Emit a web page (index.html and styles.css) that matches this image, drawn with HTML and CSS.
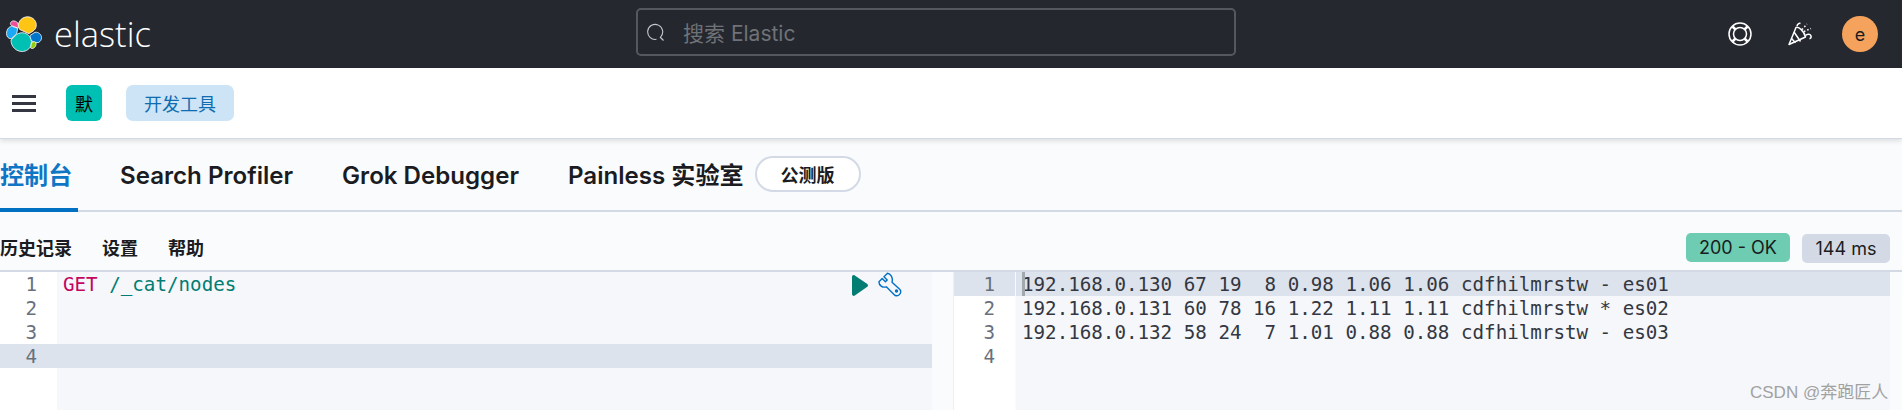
FILE: index.html
```html
<!DOCTYPE html>
<html lang="zh">
<head>
<meta charset="utf-8">
<title>Console - Elastic</title>
<link rel="stylesheet" href="styles.css">
</head>
<body>
<header class="topbar">
  <div class="brand">
    <svg class="logo" viewBox="0 0 36 36" width="36" height="36">
      <g stroke="#fff" stroke-width="0.8">
        <path fill="#f04e98" d="M4.400 7.500C5 4.500 8.800 4 11.500 6.600L13 10.200 11.700 12 6 9.800C5 9.400 4.300 8.500 4.400 7.500Z"/>
        <path fill="#fec514" d="M12.300 10.500C12 5 16.500.6 22 .8c5.300.2 9 4.800 8.200 9.500-.3 2-1.600 3.700-3.300 4.900l-4 2.500-9.200-4.200-1.400-3Z"/>
        <path fill="#1ba9f5" d="M.5 17.500C.5 13 3.600 10 6.500 10.400l5.200 2-1 5.200-5.600 5.200C2 22.600.5 20.300.5 17.500Z"/>
        <path fill="#0077cc" d="M24 19.500l5-3.200c3.500-.5 6.500 2.200 6.500 5.300 0 2-1 3.800-2.800 4.800l-4 .5-4.700-3.500Z"/>
        <path fill="#00bfb3" d="M5 24l5.900-5.700c4-2.500 8.800-1.800 11.700 1.100 3 3 3.200 7 2.300 9.800-.9 3.700-4.700 6.300-8.700 6.300C10.500 35.500 5 31 5 24Z"/>
        <path fill="#93c90e" d="M25.800 26l2.700-.3 1.500.9c.5 3.300-1.800 6.300-4.300 5.900l-1.200-.7 1.300-5.800Z"/>
      </g>
    </svg>
    <span class="wordmark">elastic</span>
  </div>
  <div class="searchbox">
    <svg class="search-icon" viewBox="0 0 18 18" width="18" height="18" fill="none" stroke="#c6c8cb" stroke-width="1.100">
      <path d="M9.500 16.300A7.500 7.500 0 1 1 13.700 14M13 14l3.500 3.500"/>
    </svg>
    <span class="placeholder">搜索 Elastic</span>
  </div>
  <div class="topicons">
    <svg class="topicon" viewBox="0 0 24 24" width="24" height="24" fill="none" stroke="#fff" stroke-width="1.500">
      <circle cx="12" cy="12" r="11"/>
      <circle cx="12" cy="12" r="6.500"/>
      <path stroke-width="2.500" d="M4.500 4.500l3 3M19.500 4.500l-3 3M4.500 19.500l3-3M19.500 19.500l-3-3"/>
    </svg>
    <svg class="topicon" viewBox="0 0 24 24" width="24" height="24" fill="none" stroke="#fff" stroke-width="1.500">
      <path stroke-linejoin="round" d="M1 22.500L8 5.500c3-1 8 3.500 9.500 9.500L1 22.500Z"/>
      <path d="M6 10l6.500 9.500M3.500 16.500l4 4.300M9 4c.5-2 2-3 3.500-2.500M17.500 13.500c2-2 5-1.500 5.500.5.3 1.200-.5 2.500-1.500 2.800"/>
      <path stroke-dasharray="1.500 2" d="M14 7.500L19 2M16 9.500l7-3"/>
    </svg>
    <span class="avatar">e</span>
  </div>
</header>

<nav class="navbar">
  <span class="burger"><i></i><i></i><i></i></span>
  <span class="space">默</span>
  <span class="crumb">开发工具</span>
</nav>

<main class="page">
  <div class="tabs">
    <span class="tab active">控制台</span>
    <span class="tab">Search Profiler</span>
    <span class="tab">Grok Debugger</span>
    <span class="tab tab-beta">Painless 实验室</span>
    <span class="beta">公测版</span>
  </div>
  <div class="toolbar">
    <div class="menu">
      <span>历史记录</span>
      <span>设置</span>
      <span>帮助</span>
    </div>
    <div class="statuses">
      <span class="status ok">200 - OK</span>
      <span class="status time">144 ms</span>
    </div>
  </div>
  <div class="editors">
    <section class="pane request">
      <div class="gutter">
        <div class="num">1</div>
        <div class="num">2</div>
        <div class="num">3</div>
        <div class="num current">4</div>
      </div>
      <div class="code">
        <div class="line"><span class="method">GET</span> <span class="url">/_cat/nodes</span></div>
        <div class="line"></div>
        <div class="line"></div>
        <div class="line current"></div>
        <div class="actions">
          <svg viewBox="0 0 16 21" width="16" height="21"><path fill="#017d73" d="M0 2C0 .4 1.600-.4 2.800.5l12.500 8.500c.9.700.9 2.100 0 2.800L2.800 20.500C1.600 21.400 0 20.600 0 19Z"/></svg>
          <svg viewBox="0 0 25 25" width="25" height="25" fill="none" stroke="#0071c2" stroke-width="1.400" stroke-linejoin="round">
            <path d="M9.500 1.200L6 4.700l3.200 3.200L7.400 9.700 4.200 6.500 1 9.800c-.2 3.400 3.500 6.300 7.300 5l7.700 7.700c1.300 1.500 3.500 1.500 5.200.2 1.900-1.600 2-3.900.5-5.400L14 10.200c1.300-4.400-1.500-8.800-4.500-9Z"/>
            <circle cx="18.500" cy="19" r="1" fill="#0071c2"/>
          </svg>
        </div>
      </div>
    </section>
    <section class="pane response">
      <div class="gutter">
        <div class="num current">1</div>
        <div class="num">2</div>
        <div class="num">3</div>
        <div class="num">4</div>
      </div>
      <div class="code">
        <div class="line current"><i class="cursor"></i>192.168.0.130 67 19  8 0.98 1.06 1.06 cdfhilmrstw - es01</div>
        <div class="line">192.168.0.131 60 78 16 1.22 1.11 1.11 cdfhilmrstw * es02</div>
        <div class="line">192.168.0.132 58 24  7 1.01 0.88 0.88 cdfhilmrstw - es03</div>
        <div class="line"></div>
      </div>
    </section>
  </div>
</main>
<span class="watermark">CSDN @奔跑匠人</span>
</body>
</html>
```
FILE: styles.css
```css
* { box-sizing: border-box; }
html, body { margin: 0; height: 100%; overflow: hidden; }
body {
  width: 1902px;
  height: 410px;
  position: relative;
  display: flex;
  flex-direction: column;
  background: #fafbfd;
  color: #1a1c21;
  font-family: Inter, "Noto Sans CJK SC", sans-serif;
}

.topbar {
  height: 68px;
  flex: none;
  background: #25282f;
  display: flex;
  align-items: center;
  padding: 0 24px 0 6px;
}
.brand { width: 630px; display: flex; align-items: center; gap: 12px; }
.logo { flex: none; }
.wordmark {
  color: #fff;
  font-family: "Open Sans", sans-serif;
  font-weight: 300;
  font-size: 34.500px;
  line-height: 36px;
}
.searchbox {
  width: 600px;
  height: 48px;
  margin-top: -4px;
  border: 2px solid #55585e;
  border-radius: 5px;
  background: #24272e;
  display: flex;
  align-items: center;
  padding-left: 9px;
  gap: 18px;
}
.placeholder { color: #6f7277; font-size: 21px; }
.topicons {
  margin-left: auto;
  display: flex;
  align-items: center;
}
.topicon { margin-right: 36px; flex: none; }
.topicon + .topicon { margin-right: 30px; }
.avatar {
  width: 36px;
  height: 36px;
  border-radius: 50%;
  background: #f5a35c;
  color: #1a1c21;
  display: flex;
  align-items: center;
  justify-content: center;
  font-size: 18px;
}

.navbar {
  height: 71px;
  flex: none;
  background: #fff;
  border-bottom: 1px solid #d3dae6;
  box-shadow: 0 2px 5px rgba(0, 0, 0, .12);
  display: flex;
  align-items: center;
  padding-left: 12px;
  position: relative;
}
.burger { width: 24px; display: flex; flex-direction: column; gap: 4px; margin-right: 30px; }
.burger i { height: 3px; background: #343741; display: block; }
.space {
  width: 36px;
  height: 36px;
  border-radius: 6px;
  background: #00bfb3;
  color: #000;
  display: flex;
  align-items: center;
  justify-content: center;
  font-size: 18px;
  margin-right: 24px;
}
.crumb {
  width: 108px;
  height: 36px;
  border-radius: 7px;
  background: #cce4f5;
  color: #0f6cb0;
  display: flex;
  align-items: center;
  justify-content: center;
  font-size: 18px;
}

.page { flex: 1; display: flex; flex-direction: column; min-height: 0; }
.tabs {
  height: 73px;
  flex: none;
  border-bottom: 2px solid #d3dae6;
  display: flex;
  align-items: center;
  font-size: 24.100px;
  font-weight: 600;
}
.tab { margin-right: 49px; height: 71px; line-height: 73px; }
.tab.active {
  color: #0f76c5;
  margin-right: 42px;
  width: 78px;
  border-bottom: 4px solid #0071c2;
  height: 73px;
  margin-bottom: -2px;
}
.tab-beta { margin-right: 11px; }
.beta {
  width: 106px;
  height: 36px;
  border: 2px solid #d3dae6;
  border-radius: 18px;
  background: #fff;
  font-size: 18px;
  display: flex;
  align-items: center;
  justify-content: center;
  margin-top: -2px;
}

.toolbar {
  height: 60px;
  flex: none;
  border-bottom: 2px solid #d3dae6;
  display: flex;
  align-items: center;
  justify-content: space-between;
  padding-right: 12px;
}
.menu { display: flex; gap: 30px; font-size: 18px; font-weight: 600; margin-top: 12px; }
.statuses { display: flex; align-items: center; gap: 12px; padding-top: 14px; }
.status {
  height: 29px;
  border-radius: 5px;
  font-size: 18px;
  display: flex;
  align-items: center;
  justify-content: center;
}
.ok { width: 104px; background: #6dccb1; margin-top: -1px; }
.time { width: 88px; background: #d3dae6; margin-top: 1px; }

.editors { flex: 1; display: flex; min-height: 0; }
.pane {
  display: flex;
  font-family: "DejaVu Sans Mono", monospace;
  font-size: 19.200px;
  line-height: 24px;
}
.request { width: 932px; flex: none; }
.response { width: 937px; flex: none; margin-left: 21px; border-left: 1px solid #eef0f5; }
.request .gutter { width: 57px; flex: none; background: #fff; }
.response .gutter { width: 61px; flex: none; background: #fff; margin-right: 1px; }
.num { height: 24px; padding-top: 1px; text-align: right; padding-right: 20px; color: #69707d; }
.num.current { background: #dde3ec; }
.code { flex: 1; background: #f5f7fb; position: relative; min-width: 0; }
.line { height: 24px; padding: 1px 0 0 6px; color: #343741; position: relative; white-space: pre; }
.line.current { background: #dde3ec; }
.method { color: #c4065f; }
.url { color: #017d73; }
.cursor {
  position: absolute;
  left: 6px;
  top: 0;
  width: 3px;
  height: 24px;
  background: #a3a7ae;
}
.actions {
  position: absolute;
  top: 0;
  left: 795px;
  display: flex;
  align-items: flex-start;
  gap: 10px;
}
.actions svg:first-child { margin-top: 3px; }
.watermark {
  position: absolute;
  left: 1750px;
  top: 378px;
  font-family: "Liberation Sans", "Noto Sans CJK SC", sans-serif;
  font-size: 17px;
  color: #a1a1a1;
  white-space: nowrap;
}
```
